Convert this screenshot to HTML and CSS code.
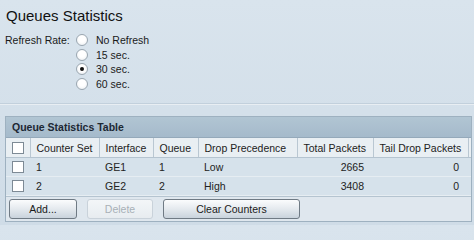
FILE: index.html
```html
<!DOCTYPE html>
<html>
<head>
<meta charset="utf-8">
<link rel="stylesheet" href="styles.css">
</head>
<body>
<div class="page">
  <h1 class="title">Queues Statistics</h1>
  <div class="refresh">
    <div class="refresh-label">Refresh Rate:</div>
    <div class="options">
      <label class="opt"><span class="radio"></span>No Refresh</label>
      <label class="opt"><span class="radio"></span>15 sec.</label>
      <label class="opt"><span class="radio checked"></span>30 sec.</label>
      <label class="opt"><span class="radio"></span>60 sec.</label>
    </div>
  </div>
  <div class="sep"></div>
  <div class="panel">
    <div class="panel-head">Queue Statistics Table</div>
    <table class="grid">
      <colgroup>
        <col class="c-chk"><col class="c-set"><col class="c-if"><col class="c-q"><col class="c-dp"><col class="c-tp"><col class="c-td"><col class="c-pad">
      </colgroup>
      <thead>
        <tr>
          <th class="chk"><span class="box"></span></th>
          <th>Counter Set</th>
          <th>Interface</th>
          <th>Queue</th>
          <th>Drop Precedence</th>
          <th>Total Packets</th>
          <th>Tail Drop Packets</th>
          <th class="pad"></th>
        </tr>
      </thead>
      <tbody>
        <tr>
          <td class="chk"><span class="box"></span></td>
          <td>1</td><td>GE1</td><td>1</td><td>Low</td><td class="num">2665</td><td class="num">0</td><td class="pad"></td>
        </tr>
        <tr>
          <td class="chk"><span class="box"></span></td>
          <td>2</td><td>GE2</td><td>2</td><td>High</td><td class="num">3408</td><td class="num">0</td><td class="pad"></td>
        </tr>
      </tbody>
    </table>
    <div class="actions">
      <button class="btn btn-add">Add...</button>
      <button class="btn btn-del" disabled>Delete</button>
      <button class="btn btn-clear">Clear Counters</button>
    </div>
  </div>
</div>
</body>
</html>
```
FILE: styles.css
```css
html, body {
  margin: 0;
  padding: 0;
}
body {
  width: 474px;
  height: 225px;
  overflow: hidden;
  background: linear-gradient(180deg, #d9e4ed 0%, #cfdce7 100%);
  font-family: "Liberation Sans", Arial, sans-serif;
  font-size: 10.5px;
  color: #1a1a1a;
}
.page {
  padding: 0 3px 0 5px;
}
.title {
  margin: 0;
  padding: 7px 0 0 1px;
  font-size: 15px;
  font-weight: normal;
  line-height: 18px;
  color: #111;
}
.refresh {
  display: flex;
  margin-top: 8px;
}
.refresh-label {
  width: 71px;
  line-height: 14.5px;
}
.options {
  display: flex;
  flex-direction: column;
}
.opt {
  display: flex;
  align-items: center;
  height: 14.5px;
}
.radio {
  width: 10px;
  height: 10px;
  border: 1px solid #9aa6b0;
  border-radius: 50%;
  background: radial-gradient(circle at 50% 40%, #ffffff 40%, #e6eaee 100%);
  margin-right: 8px;
  position: relative;
  box-sizing: content-box;
}
.radio.checked::after {
  content: "";
  position: absolute;
  left: 3px;
  top: 3px;
  width: 4px;
  height: 4px;
  border-radius: 50%;
  background: #111;
}
.sep {
  margin: 12px -3px 0 -5px;
  height: 1px;
  background: #e8eef3;
  border-top: 1px solid #c2d0dc;
}
.panel {
  margin-top: 11px;
  border: 1px solid #9eb1c0;
  width: 465px;
  background: #dfe7ee;
}
.panel-head {
  height: 20px;
  line-height: 20px;
  padding-left: 6px;
  font-weight: bold;
  color: #1c2733;
  background: linear-gradient(180deg, #b1c5d3 0%, #a5bacb 100%);
  border-bottom: 1px solid #94a9ba;
}
.grid {
  border-collapse: collapse;
  table-layout: fixed;
  width: 465px;
}
.c-chk { width: 24px; }
.c-set { width: 69px; }
.c-if { width: 54px; }
.c-q { width: 45px; }
.c-dp { width: 99px; }
.c-tp { width: 76px; }
.c-td { width: 95px; }
.c-pad { width: 3px; }
.grid th {
  height: 19px;
  padding: 0 6px;
  font-weight: normal;
  text-align: left;
  white-space: nowrap;
  background: #e9eff3;
  border-right: 1px solid #b9c7d2;
  border-bottom: 1px solid #b5c4d0;
  color: #222;
}
.grid th.pad, .grid td.pad {
  border-right: none;
  padding: 0;
}
.grid td {
  height: 18px;
  padding: 0 6px;
  white-space: nowrap;
  background: #d6e2eb;
  border-bottom: 1px solid #e6edf2;
  color: #222;
}
.grid td.num {
  text-align: right;
  padding-right: 9px;
}
.grid .chk {
  padding: 0 0 0 6px;
}
.box {
  display: block;
  width: 10px;
  height: 10px;
  border: 1px solid #7d8a95;
  background: #fff;
}
.actions {
  display: flex;
  align-items: center;
  gap: 10px;
  padding: 2px 4px 2px 3px;
  border-top: 1px solid #b5c4d0;
}
.btn {
  height: 20px;
  font-family: "Liberation Sans", Arial, sans-serif;
  font-size: 10.5px;
  color: #1a1a1a;
  border: 1px solid #6f7a84;
  border-radius: 3px;
  background: linear-gradient(180deg, #fbfcfd 0%, #e4e9ee 50%, #c9d3dc 100%);
  padding: 0;
}
.btn-add { width: 68px; }
.btn-del {
  width: 66px;
  color: #a8b0b7;
  border-color: #c9d2da;
  background: linear-gradient(180deg, #f3f6f8 0%, #e7ecf0 100%);
}
.btn-clear { width: 137px; }
```
